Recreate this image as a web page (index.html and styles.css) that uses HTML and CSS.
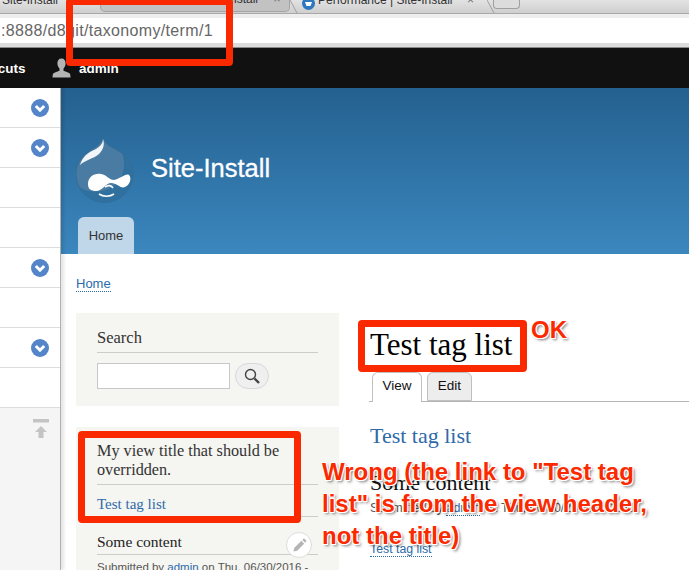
FILE: index.html
```html
<!DOCTYPE html>
<html lang="en">
<head>
<meta charset="utf-8">
<title>Test tag list</title>
<link rel="stylesheet" href="styles.css">
</head>
<body>
<div class="page">
  <div class="tabstrip">
    <span class="tab tab-first">Site-Install</span>
    <span class="tab tab-mid"><span class="tab-label">Site-Install</span><span class="tab-x">×</span></span>
    <svg class="slant" viewBox="0 0 8 13"><path d="M0 0L7 13" fill="none" stroke="#a0a0a0"/></svg>
    <span class="tab tab-perf"><svg class="favicon" viewBox="0 0 13 13"><circle cx="6.500" cy="6.500" r="6.500" fill="#2f78bd"/><path d="M3 5h7l-1.500 4h-4z" fill="#fff"/></svg><span class="tab-label">Performance | Site-Install</span><span class="tab-x">×</span></span>
    <svg class="slant" viewBox="0 0 8 13"><path d="M0 0L7 13" fill="none" stroke="#a0a0a0"/></svg>
    <span class="tab-new"></span>
  </div>
  <div class="addressbar"><span class="url">:8888/d8git/taxonomy/term/1</span></div>
  <div class="toolbar">
    <span class="tb-item tb-short">shortcuts</span>
    <svg class="tb-user" viewBox="0 0 20 20"><path d="M10 0c3 0 4.300 2.200 4.300 5 0 2.400-1 4.500-2.200 5.600v2.200c2.700 1 6 2 7 3.500L19.500 20H.5l.4-3.700c1-1.500 4.300-2.500 7-3.500v-2.200C6.700 9.500 5.700 7.400 5.700 5 5.700 2.200 7 0 10 0z" fill="#b4b4b4"/></svg>
    <span class="tb-item tb-admin">admin</span>
  </div>
  <div class="content-row">
    <aside class="sidebar">
      <div class="side-row"><span class="chev"><svg viewBox="0 0 18 18"><path d="M4.800 7l4.200 4.200L13.200 7" fill="none" stroke="#fff" stroke-width="3"/></svg></span></div>
      <div class="side-row"><span class="chev"><svg viewBox="0 0 18 18"><path d="M4.800 7l4.200 4.200L13.200 7" fill="none" stroke="#fff" stroke-width="3"/></svg></span></div>
      <div class="side-row"></div>
      <div class="side-row"></div>
      <div class="side-row"><span class="chev"><svg viewBox="0 0 18 18"><path d="M4.800 7l4.200 4.200L13.200 7" fill="none" stroke="#fff" stroke-width="3"/></svg></span></div>
      <div class="side-row"></div>
      <div class="side-row"><span class="chev"><svg viewBox="0 0 18 18"><path d="M4.800 7l4.200 4.200L13.200 7" fill="none" stroke="#fff" stroke-width="3"/></svg></span></div>
      <div class="side-row"></div>
      <div class="side-foot">
        <svg class="side-up" viewBox="0 0 16 20"><rect x="0" width="16" height="3.500" fill="#c4c4c4"/><path d="M8 7l6 6h-3.500v6h-5v-6H2z" fill="#c4c4c4"/></svg>
      </div>
    </aside>
    <main class="main">
      <header class="site-header">
        <div class="branding">
          <svg class="logo" viewBox="0 0 58 66">
            <path d="M27 0C28 8 37 10 46 16C53 21 57 28 57 37A28.500 28.500 0 1 1 0 37C0 25 7 18 15 13C21 9 26 6 27 0z" fill="#4a7ca3" stroke="#35688f" stroke-width=".8"/>
            <path d="M46 16C53 21 57 28 57 37A28.500 28.500 0 0 1 3 50C14 57 30 56 40 47C48 39 50 27 46 16z" fill="#30709f"/>
            <path d="M27 2C27 9 20 12 14 15C9 18 6 22 4 28C9 23 17 22 23 17C27 13 29 8 27 2z" fill="#f2f5f8"/>
            <path d="M12 47C12 40 18 36 25 37C31 38 33 43 38 43C44 42 50 36 53 38C56 41 54 48 49 50C45 52 42 47 36 46C30 45 27 54 20 54C15 54 12 52 12 47z" fill="#fff"/>
            <path d="M29 50c3-2 6-2 8 1M23 57c4 3 11 3 15 0" fill="none" stroke="#fff" stroke-width="1.600"/>
          </svg>
          <span class="site-name">Site-Install</span>
        </div>
        <nav class="primary-nav"><a class="primary-tab">Home</a></nav>
      </header>
      <div class="crumbs"><a class="dotted">Home</a></div>
      <div class="columns">
        <div class="left-col">
          <section class="block block-search">
            <h2 class="block-title search-title">Search</h2>
            <div class="search-form">
              <span class="search-input"></span>
              <span class="search-btn"><svg viewBox="0 0 16 16"><circle cx="6.500" cy="6.500" r="5" fill="none" stroke="#444" stroke-width="1.400"/><path d="M10.500 10.500l4.500 4.500" stroke="#444" stroke-width="2.400"/></svg></span>
            </div>
          </section>
          <section class="block block-view">
            <h2 class="block-title view-title">My view title that should be overridden.</h2>
            <div class="view-link"><a class="plain-link">Test tag list</a></div>
            <h3 class="block-title node-title">Some content</h3>
            <p class="submitted">Submitted by <a class="plain-link">admin</a> on Thu, 06/30/2016 -</p>
            <span class="pencil"><svg viewBox="0 0 16 16"><path d="M1.500 14.500l1-4 7.500-7.500 3 3-7.500 7.500zM11 2l1-1c.500-.500 1-.500 1.500 0l1.500 1.500c.500.500.500 1 0 1.500l-1 1z" fill="#b5b5b5"/></svg></span>
          </section>
        </div>
        <div class="right-col">
          <h1 class="page-title">Test tag list</h1>
          <div class="tabs">
            <a class="tab-btn tab-on">View</a>
            <a class="tab-btn tab-off">Edit</a>
          </div>
          <h2 class="view-header"><a>Test tag list</a></h2>
          <h3 class="node-big">Some content</h3>
          <p class="node-meta">Submitted by <a class="dotted">admin</a> on Thu, 06/30/2016 - 12:00</p>
          <p class="node-tag"><a class="dotted">Test tag list</a></p>
        </div>
      </div>
    </main>
  </div>
  <div class="mark mark-url"></div>
  <div class="mark mark-title"></div>
  <div class="mark mark-block"></div>
  <div class="note note-ok">OK</div>
  <div class="note note-wrong">Wrong (the link to "Test tag list" is from the view header, not the title)</div>
</div>
</body>
</html>
```
FILE: styles.css
```css
* { box-sizing: border-box; }
html, body { margin: 0; padding: 0; }
body { font-family: "Liberation Sans", Arial, sans-serif; background: #fff; }
h1, h2, h3, p { margin: 0; font-weight: normal; }
.page { position: relative; width: 689px; height: 570px; overflow: hidden; display: flex; flex-direction: column; }

.tabstrip { height: 14px; flex: none; display: flex; background: linear-gradient(#e2e2e2, #cfcfcf); border-bottom: 1px solid #a8a8a8; overflow: hidden; font-size: 12px; color: #333; }
.tab { height: 13px; flex: none; display: flex; align-items: flex-end; line-height: 14px; padding-bottom: 6px; white-space: nowrap; }
.tab-first { width: 100px; padding-left: 2px; }
.tab-mid { width: 190px; height: 12px; background: #c2c2c2; border: 1px solid #a4a4a4; border-top: 0; border-radius: 0 0 5px 5px; padding: 0 0 5px 101px; }
.slant { width: 8px; height: 13px; flex: none; display: block; }
.tab-perf { width: 189px; padding-left: 4px; }
.tab-perf .favicon { width: 13px; height: 13px; margin-right: 3px; flex: none; margin-bottom: -3px; }
.tab-label { white-space: nowrap; }
.tab-mid .tab-x { margin-left: 9px; }
.tab-x { width: 20px; margin-left: 8px; text-align: center; color: #666; }
.tab-new { width: 27px; height: 9px; margin-left: -2px; flex: none; border: 1px solid #9f9f9f; border-top: 0; border-radius: 0 0 4px 4px; background: #dcdcdc; }

.addressbar { height: 33px; flex: none; display: flex; align-items: center; background: #fff; border-top: 4px solid #eee; border-bottom: 4px solid #dcdcdc; }
.url { font-size: 16px; color: #666; letter-spacing: .34px; padding-left: 1px; white-space: nowrap; }

.toolbar { height: 41px; flex: none; display: flex; align-items: center; background: #111; border-top: 1px solid #8a8a8a; color: #fff; font-size: 13.500px; font-weight: bold; }
.tb-item { white-space: nowrap; }
.tb-short { margin-left: -36px; width: 58px; text-align: right; }
.tb-user { width: 19px; height: 20px; margin-left: 30px; flex: none; }
.tb-admin { margin-left: 8px; }

.content-row { flex: 1; display: flex; min-height: 0; }
.sidebar { width: 61px; flex: none; display: flex; flex-direction: column; background: #fff; border-right: 1px solid #b0b0b0; box-shadow: 3px 0 3px rgba(0,0,0,.1); position: relative; z-index: 1; }
.side-row { height: 40px; flex: none; display: flex; align-items: center; justify-content: flex-end; padding-right: 11px; border-bottom: 1px solid #ddd; }
.chev { width: 18px; height: 18px; border-radius: 50%; background: #5585c9; display: block; }
.chev svg { display: block; width: 18px; height: 18px; }
.side-foot { flex: 1; background: #f5f5f5; display: flex; justify-content: flex-end; padding: 11px 11px 0 0; }
.side-up { width: 16px; height: 20px; }

.main { flex: 1; min-width: 0; }
.site-header { height: 166px; background: linear-gradient(#24608f, #3b87be); padding-left: 15px; display: flex; flex-direction: column; justify-content: flex-end; }
.branding { display: flex; align-items: center; height: 66px; margin-bottom: 14px; }
.logo { width: 58px; height: 66px; flex: none; }
.site-name { color: #fff; font-size: 25.500px; margin-left: 17px; margin-bottom: 4px; -webkit-text-stroke: .3px #fff; }
.primary-nav { display: flex; padding-left: 2px; }
.primary-tab { width: 56px; height: 37px; background: #c0d6e9; border-radius: 6px 6px 0 0; color: #333; font-size: 13px; text-align: center; line-height: 37px; }

.crumbs { padding: 22px 0 0 15px; height: 59px; font-size: 13px; line-height: 16px; color: #2a6ba8; }
.dotted { color: #2a6ba8; border-bottom: 1px dotted #2a6ba8; }
.plain-link { color: #2f6aa8; }
.columns { display: flex; padding-left: 15px; }
.left-col { width: 263px; flex: none; }
.block { background: #f5f5f1; padding: 14px 21px 0; position: relative; font-family: "Liberation Serif", serif; }
.block-search { height: 93px; margin-bottom: 21px; }
.block-view { height: 200px; padding-top: 15px; }
.block-title { font-size: 15.500px; line-height: 20px; color: #333; padding-bottom: 4px; border-bottom: 1px solid #ccc; }
.search-title { font-size: 16.500px; line-height: 21px; }
.search-form { display: flex; align-items: center; margin-top: 10px; }
.search-input { width: 133px; height: 26px; background: #fff; border: 1px solid #c8c8c8; display: block; }
.search-btn { width: 34px; height: 26px; margin-left: 5px; background: #efefef; border: 1px solid #d8d8d8; border-radius: 13px; display: flex; align-items: center; justify-content: center; }
.search-btn svg { width: 16px; height: 16px; }
.view-title { font-size: 16.200px; line-height: 19px; padding-bottom: 4px; }
.view-link { font-size: 15px; line-height: 18px; padding: 10px 0 3px; border-bottom: 1px solid #ccc; }
.node-title { margin-top: 16px; font-size: 15.500px; line-height: 18px; padding-bottom: 3px; color: #222; }
.submitted { font-family: "Liberation Sans", Arial, sans-serif; font-size: 11.500px; color: #555; margin-top: 6px; white-space: nowrap; }
.pencil { position: absolute; right: 27px; top: 105px; width: 26px; height: 26px; border-radius: 50%; background: #fff; border: 1px solid #ddd; display: flex; align-items: center; justify-content: center; }
.pencil svg { width: 15px; height: 15px; }

.right-col { flex: 1; min-width: 0; padding-left: 31px; }
.page-title { font-family: "Liberation Serif", serif; font-size: 31px; line-height: 36px; color: #000; padding-top: 14px; white-space: nowrap; }
.tabs { display: flex; margin: 9px 0 0 -1px; padding-left: 3px; height: 30px; border-bottom: 1px solid #b5b5b5; font-size: 13.500px; gap: 5px; color: #111; }
.tab-btn { height: 29px; border: 1px solid #c0c0c0; border-radius: 6px 6px 0 0; text-align: center; line-height: 25px; }
.tab-on { width: 50px; height: 30px; background: #fff; border-bottom: 0; }
.tab-off { width: 45px; background: #ededed; }
.view-header { font-family: "Liberation Serif", serif; font-size: 22px; line-height: 24px; color: #2f6aa8; margin-top: 22px; }
.node-big { font-family: "Liberation Serif", serif; font-size: 22px; line-height: 24px; color: #111; margin-top: 23px; }
.node-meta { font-size: 12.500px; color: #555; line-height: 14px; margin-top: 6px; white-space: nowrap; }
.node-tag { font-size: 12.300px; line-height: 14px; margin-top: 27px; }

.mark { position: absolute; border: 7px solid #fb2900; border-radius: 4px; z-index: 3; }
.mark-url { left: 66px; top: -2px; width: 167px; height: 68px; }
.mark-title { left: 358px; top: 320px; width: 169px; height: 52px; }
.mark-block { left: 78px; top: 431px; width: 223px; height: 92px; }
.note { position: absolute; z-index: 4; color: #fb2900; font-weight: bold; font-family: "Liberation Sans", Arial, sans-serif; text-shadow: 1px 1px 0 #fff, -1px -1px 0 #fff, 1px -1px 0 #fff, -1px 1px 0 #fff, 2px 2px 3px rgba(0,0,0,.55); }
.note-ok { left: 531px; top: 317px; font-size: 24px; line-height: 26px; }
.note-wrong { left: 322px; top: 456px; width: 336px; font-size: 24px; line-height: 32px; }
```
